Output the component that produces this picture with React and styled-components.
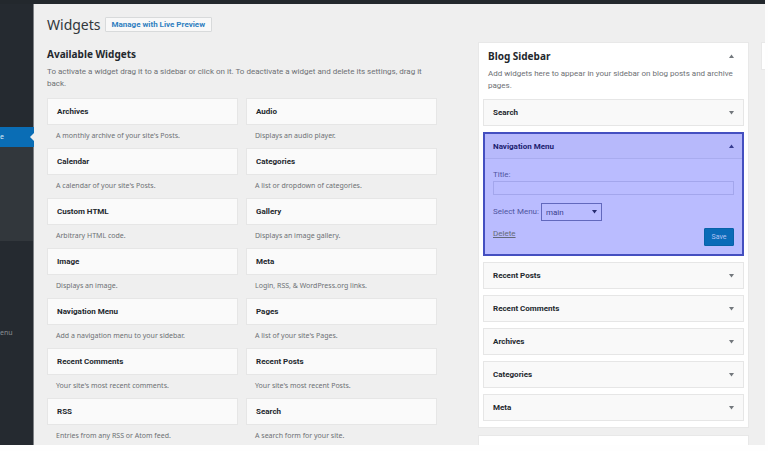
import React from "react";
import styled, { createGlobalStyle } from "styled-components";

const Global = createGlobalStyle`
  * { box-sizing: border-box; }
  body { margin: 0; background: #fefefe; font-family: "Noto Sans", "Open Sans", sans-serif; font-size: 8px; color: #6d7074; }
  h1, h2, h3, p { margin: 0; }
  button, input, select { font-family: inherit; }
`;
const Page = styled.div`
  height: 100vh;
  padding: 0 3px 6px 0;
  overflow: hidden;
  display: flex;
  flex-direction: column;
`;
const AdminBar = styled.header`
  flex: 0 0 4px;
  background: #23282d;
`;
const Body = styled.div`
  flex: 1;
  min-height: 0;
  display: flex;
  background: #efefef;
  overflow: hidden;
`;
const AdminMenu = styled.nav`
  flex: 0 0 34px;
  display: flex;
  flex-direction: column;
  overflow: hidden;
  background: linear-gradient(90deg, #252a30 33px, #7d8084 33px);
`;
const MenuSpace = styled.div`
  flex: 0 0 ${(p) => p.$size}px;
`;
const MenuLink = styled.a`
  flex: 0 0 20px;
  display: flex;
  align-items: center;
  justify-content: space-between;
  line-height: 20px;
  font-size: 7px;
  text-decoration: none;
  color: ${(p) => (p.$active ? "#dceaf5" : "#8b8f93")};
  background: ${(p) => (p.$active ? "#0a6db5" : "transparent")};
`;
const Notch = styled.span`
  border: 4px solid transparent;
  border-left: 0;
  border-right-color: #efefef;
`;
const Submenu = styled.div`
  flex: 0 0 94px;
  margin-right: 1px;
  background: #32373c;
`;
const Main = styled.main`
  flex: 1;
  min-width: 0;
  padding: 10px 0 0 13px;
`;
const TitleRow = styled.div`
  display: flex;
  align-items: center;
  gap: 4px;
  height: 21px;
`;
const Title = styled.h1`
  font-size: 14px;
  line-height: 20px;
  font-weight: 400;
  color: #32373c;
`;
const PreviewButton = styled.button`
  height: 15px;
  padding: 0 6px;
  border: 1px solid #d8dadb;
  border-radius: 1px;
  background: #f8f8f8;
  color: #2f7fc0;
  font-family: Roboto, sans-serif;
  font-size: 8px;
  line-height: 12px;
  font-weight: 700;
  white-space: nowrap;
`;
const Columns = styled.div`
  display: grid;
  grid-template-columns: minmax(0, 419fr) minmax(0, 271fr) 4px;
  column-gap: 12px;
  align-items: start;
`;
const Available = styled.section`
  padding: 12px 29px 0 0;
  min-width: 0;
`;
const Heading = styled.h2`
  font-size: 10px;
  line-height: 14px;
  font-weight: 700;
  color: #23282d;
`;
const Note = styled.p`
  padding-top: ${(p) => (p.$spaced ? 5 : 0)}px;
  font-family: Roboto, sans-serif;
  font-size: 8px;
  line-height: 12px;
`;
const WidgetGrid = styled.div`
  display: grid;
  grid-template-columns: 1fr 1fr;
  column-gap: 8px;
  padding-top: 8px;
`;
const Card = styled.article`
  height: 50px;
`;
const CardTitle = styled.h3`
  height: 27px;
  padding: 0 9px;
  border: 1px solid #e6e6e6;
  background: #fafafa;
  font-family: Roboto, sans-serif;
  font-size: 8px;
  line-height: 25px;
  color: #23282d;
`;
const CardText = styled.p`
  padding: 5px 9px 0;
  font-size: 7px;
  line-height: 11px;
`;
const Areas = styled.div`
  padding-top: 7px;
  display: grid;
  gap: 7px;
`;
const Area = styled.section`
  min-width: 0;
  min-height: 28px;
  padding: 0 4px 6px;
  border: 1px solid #e8e8e8;
  background: #fff;
`;
const Description = styled.div`
  padding: 0 5px 7px;
`;
const Row = styled.div`
  display: flex;
  justify-content: space-between;
  align-items: center;
`;
const AreaHead = styled(Row)`
  padding: 6px 5px 5px 0;
`;
const Stack = styled.div`
  display: grid;
  gap: 6px;
`;
const WidgetButton = styled.button`
  display: flex;
  align-items: center;
  justify-content: space-between;
  width: 100%;
  height: 27px;
  padding: 0 9px;
  border: 1px solid #e6e6e6;
  background: #f9f9f9;
  color: #23282d;
  font-family: Roboto, sans-serif;
  font-size: 8px;
  font-weight: 700;
`;
const Open = styled.section`
  border: 2px solid #444fc0;
  background: #babcff;
  color: #4f55a0;
`;
const OpenButton = styled(WidgetButton)`
  height: 25px;
  padding: 0 8px;
  border-width: 0 0 1px;
  border-color: #a9acef;
  background: #b7b9fb;
  color: #1c2270;
`;
const Form = styled.form`
  padding: 10px 8px 8px;
  font-family: Roboto, sans-serif;
  font-size: 8px;
`;
const Label = styled.label`
  display: block;
  line-height: 12px;
`;
const TextInput = styled.input`
  display: block;
  width: 100%;
  height: 14px;
  border: 1px solid #a3a6ec;
  background: transparent;
`;
const SelectRow = styled.div`
  display: flex;
  align-items: center;
  gap: 2px;
  padding: 8px 0 7px;
`;
const SelectBox = styled.div`
  display: flex;
  align-items: center;
  height: 18px;
  width: 61px;
  padding-right: 4px;
  border: 1px solid #6268bd;
`;
const Select = styled.select`
  flex: 1;
  min-width: 0;
  padding: 0 0 0 4px;
  appearance: none;
  border: 0;
  background: transparent;
  color: #3a3f8c;
  font-size: 8px;
`;
const Actions = styled(Row)`
  align-items: flex-start;
`;
const Delete = styled.a`
  color: #646a78;
  line-height: 12px;
`;
const Save = styled.button`
  width: 30px;
  height: 18px;
  padding: 0;
  border: 1px solid #0862a8;
  border-radius: 1px;
  background: #0a6bb8;
  color: #b4c4f5;
  font-size: 7px;
`;
const ArrowIcon = styled.svg`
  display: block;
  flex: none;
  width: 5px;
  height: 4px;
  fill: ${(p) => p.$color};
`;
const Arrow = ({ up, color = "#72777c" }) => (
  <ArrowIcon $color={color} viewBox="0 0 5 4" aria-hidden="true">
    <path d={up ? "M0 4L2.5 0.5L5 4Z" : "M0 0H5L2.5 3.5Z"} />
  </ArrowIcon>
);

const available = [
  ["Archives", "A monthly archive of your site's Posts."],
  ["Audio", "Displays an audio player."],
  ["Calendar", "A calendar of your site's Posts."],
  ["Categories", "A list or dropdown of categories."],
  ["Custom HTML", "Arbitrary HTML code."],
  ["Gallery", "Displays an image gallery."],
  ["Image", "Displays an image."],
  ["Meta", "Login, RSS, & WordPress.org links."],
  ["Navigation Menu", "Add a navigation menu to your sidebar."],
  ["Pages", "A list of your site's Pages."],
  ["Recent Comments", "Your site's most recent comments."],
  ["Recent Posts", "Your site's most recent Posts."],
  ["RSS", "Entries from any RSS or Atom feed."],
  ["Search", "A search form for your site."],
];
const closed = ["Recent Posts", "Recent Comments", "Archives", "Categories", "Meta"];

const Closed = ({ name }) => (
  <WidgetButton type="button" aria-expanded="false">
    {name}
    <Arrow />
  </WidgetButton>
);

export default function App() {
  return (
    <Page>
      <Global />
      <AdminBar />
      <Body>
        <AdminMenu>
          <MenuSpace $size={123} />
          <MenuLink href="#appearance" $active>
            e<Notch />
          </MenuLink>
          <Submenu />
          <MenuSpace $size={82} />
          <MenuLink href="#menu">enu</MenuLink>
        </AdminMenu>
        <Main>
          <TitleRow>
            <Title>Widgets</Title>
            <PreviewButton type="button">Manage with Live Preview</PreviewButton>
          </TitleRow>
          <Columns>
            <Available>
              <Heading>Available Widgets</Heading>
              <Note $spaced>
                To activate a widget drag it to a sidebar or click on it. To deactivate a widget and delete its settings, drag it back.
              </Note>
              <WidgetGrid>
                {available.map(([name, text]) => (
                  <Card key={name}>
                    <CardTitle>{name}</CardTitle>
                    <CardText>{text}</CardText>
                  </Card>
                ))}
              </WidgetGrid>
            </Available>
            <Areas>
              <Area>
                <Description>
                  <AreaHead>
                    <Heading>Blog Sidebar</Heading>
                    <Arrow up />
                  </AreaHead>
                  <Note>Add widgets here to appear in your sidebar on blog posts and archive pages.</Note>
                </Description>
                <Stack>
                  <Closed name="Search" />
                  <Open>
                    <OpenButton type="button" aria-expanded="true">
                      Navigation Menu
                      <Arrow up color="#353b8f" />
                    </OpenButton>
                    <Form>
                      <Label htmlFor="title">Title:</Label>
                      <TextInput id="title" />
                      <SelectRow>
                        <Label htmlFor="menu">Select Menu:</Label>
                        <SelectBox>
                          <Select id="menu" defaultValue="main">
                            <option>main</option>
                          </Select>
                          <Arrow color="#262b70" />
                        </SelectBox>
                      </SelectRow>
                      <Actions>
                        <Delete href="#delete">Delete</Delete>
                        <Save type="button">Save</Save>
                      </Actions>
                    </Form>
                  </Open>
                  {closed.map((name) => (
                    <Closed key={name} name={name} />
                  ))}
                </Stack>
              </Area>
              <Area />
            </Areas>
            <Areas>
              <Area />
            </Areas>
          </Columns>
        </Main>
      </Body>
    </Page>
  );
}
